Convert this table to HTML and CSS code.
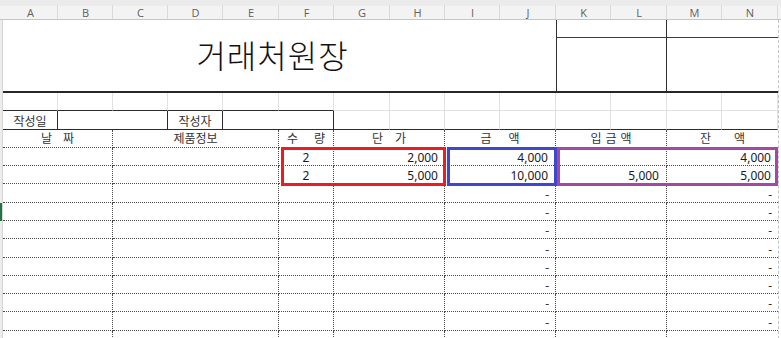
FILE: index.html
```html
<!DOCTYPE html>
<html lang="ko">
<head>
<meta charset="utf-8">
<title>거래처원장</title>
<link rel="stylesheet" href="styles.css">
</head>
<body>
<div class="sheet">
  <div class="rowhead"></div>
  <div class="pagebreak"></div>

  <div class="corner"></div>
  <div class="col">A</div><div class="col">B</div><div class="col">C</div><div class="col">D</div>
  <div class="col">E</div><div class="col">F</div><div class="col">G</div><div class="col">H</div>
  <div class="col">I</div><div class="col">J</div><div class="col">K</div><div class="col">L</div>
  <div class="col">M</div><div class="col">N</div>
  <div class="corner"></div>

  <div class="title">거래처원장</div>
  <div class="sign-top sign-left"></div>
  <div class="sign-top"></div>
  <div class="sign-big sign-left"></div>
  <div class="sign-big"></div>

  <div class="g dark-b"></div><div class="g dark-b"></div><div class="g dark-b"></div>
  <div class="g dark-b"></div><div class="g dark-b"></div><div class="g dark-b"></div>
  <div class="g"></div><div class="g"></div><div class="g"></div><div class="g"></div>
  <div class="g"></div><div class="g"></div><div class="g"></div><div class="g"></div>

  <div class="info">작성일</div>
  <div class="info s2"></div>
  <div class="info">작성자</div>
  <div class="info s2"></div>
  <div class="g dark-b"></div><div class="g dark-b"></div><div class="g dark-b"></div><div class="g dark-b"></div>
  <div class="g dark-b"></div><div class="g dark-b"></div><div class="g dark-b"></div><div class="g dark-b"></div>

  <div class="h s2"><span>날</span><span class="gap11">짜</span></div>
  <div class="h s3"><span>제품정보</span></div>
  <div class="h"><span>수</span><span class="gap16">량</span></div>
  <div class="h s2"><span>단</span><span class="gap12">가</span></div>
  <div class="h s2"><span>금</span><span class="gap17">액</span></div>
  <div class="h s2"><span>입</span><span class="gap4">금</span><span class="gap4">액</span></div>
  <div class="h s2 last"><span>잔</span><span class="gap23">액</span></div>

  <div class="d s2"></div><div class="d s3"></div><div class="d ctr">2</div>
  <div class="d s2 num n6">2,000</div><div class="d s2 num">4,000</div>
  <div class="d s2 num"></div><div class="d s2 num last">4,000</div>

  <div class="d s2"></div><div class="d s3"></div><div class="d ctr">2</div>
  <div class="d s2 num n6">5,000</div><div class="d s2 num">10,000</div>
  <div class="d s2 num">5,000</div><div class="d s2 num last">5,000</div>

  <div class="d s2"></div><div class="d s3"></div><div class="d"></div><div class="d s2"></div>
  <div class="d s2 num dash">-</div><div class="d s2"></div><div class="d s2 num dash last">-</div>

  <div class="d s2"></div><div class="d s3"></div><div class="d"></div><div class="d s2"></div>
  <div class="d s2 num dash">-</div><div class="d s2"></div><div class="d s2 num dash last">-</div>

  <div class="d s2"></div><div class="d s3"></div><div class="d"></div><div class="d s2"></div>
  <div class="d s2 num dash">-</div><div class="d s2"></div><div class="d s2 num dash last">-</div>

  <div class="d s2"></div><div class="d s3"></div><div class="d"></div><div class="d s2"></div>
  <div class="d s2 num dash">-</div><div class="d s2"></div><div class="d s2 num dash last">-</div>

  <div class="d s2"></div><div class="d s3"></div><div class="d"></div><div class="d s2"></div>
  <div class="d s2 num dash">-</div><div class="d s2"></div><div class="d s2 num dash last">-</div>

  <div class="d s2"></div><div class="d s3"></div><div class="d"></div><div class="d s2"></div>
  <div class="d s2 num dash">-</div><div class="d s2"></div><div class="d s2 num dash last">-</div>

  <div class="d s2"></div><div class="d s3"></div><div class="d"></div><div class="d s2"></div>
  <div class="d s2 num dash">-</div><div class="d s2"></div><div class="d s2 num dash last">-</div>

  <div class="d s2"></div><div class="d s3"></div><div class="d"></div><div class="d s2"></div>
  <div class="d s2 num dash">-</div><div class="d s2"></div><div class="d s2 num dash last">-</div>

  <div class="d s2"></div><div class="d s3"></div><div class="d"></div><div class="d s2"></div>
  <div class="d s2"></div><div class="d s2"></div><div class="d s2 last"></div>

  <div class="mark mark-red"></div>
  <div class="mark mark-blue"></div>
  <div class="mark mark-purple"></div>
</div>
</body>
</html>
```

FILE: styles.css
```css
* {
  box-sizing: border-box;
  margin: 0;
  padding: 0;
}

body {
  margin: 0;
  background: #ffffff;
  font-family: "Noto Sans", "Noto Sans CJK KR", sans-serif;
}

.sheet {
  position: relative;
  width: 781px;
  height: 338px;
  overflow: hidden;
  display: grid;
  grid-template-columns: 3px 55px 55px 55px 55px 56px 55px 56px 55px 55px 56px 55px 56px 55px 56px 3px;
  grid-template-rows: 20px 18px 19px 18px 18px 18px 19px 18px 18px 18px 19px 18px 18px 19px 18px 18px 18px 19px 18px;
  background: #ffffff;
}

/* column header bar */
.corner {
  background: linear-gradient(#ebebeb 0 6px, #f3f3f3 6px);
  border-bottom: 1px solid #c6c6c6;
}

.col {
  background:
    linear-gradient(#dadada, #dadada) right bottom / 1px 14px no-repeat,
    linear-gradient(#ebebeb 0 6px, #f3f3f3 6px);
  border-bottom: 1px solid #c6c6c6;
  display: flex;
  align-items: center;
  justify-content: center;
  padding-top: 5px;
  font: 11px "Open Sans", sans-serif;
  color: #5f5f5f;
}

.rowhead {
  grid-column: 1;
  grid-row: 2 / -1;
  background:
    linear-gradient(#217346, #217346) 0 183px / 2px 18px no-repeat,
    #ececec;
  border-right: 1px solid #d6d6d6;
}

.pagebreak {
  grid-column: 16;
  grid-row: 2 / -1;
  border-left: 1px dashed #c2c2c2;
}

/* title block */
.title {
  grid-column: span 10;
  grid-row: span 4;
  border-bottom: 2px solid #262626;
  display: flex;
  align-items: center;
  justify-content: center;
  padding-right: 14px;
  padding-bottom: 4px;
  font: 300 32px/1 "Noto Sans CJK KR", sans-serif;
  letter-spacing: 1px;
  color: #111111;
}

.sign-top {
  grid-column: span 2;
  border-bottom: 1px solid #3c3c3c;
}

.sign-big {
  grid-column: span 2;
  grid-row: span 3;
  border-bottom: 2px solid #262626;
}

.sign-left {
  border-left: 1px solid #2f2f2f;
  border-right: 1px solid #2f2f2f;
}

/* light grid cells */
.g {
  border-right: 1px solid #e1e1e1;
  border-bottom: 1px solid #e1e1e1;
}

.dark-b {
  border-bottom-color: #2b2b2b;
}

/* 작성일 / 작성자 row */
.info {
  border-right: 1px solid #2b2b2b;
  border-bottom: 1px solid #2b2b2b;
  display: flex;
  align-items: center;
  justify-content: center;
  font: 12px "Noto Sans CJK KR", sans-serif;
  color: #333333;
}

.s2 { grid-column: span 2; }
.s3 { grid-column: span 3; }

/* table header */
.h {
  border-right: 1px dotted #4a4a4a;
  border-bottom: 1px dotted #4a4a4a;
  display: flex;
  align-items: center;
  justify-content: center;
  padding-bottom: 3px;
  font: 12px "Noto Sans CJK KR", sans-serif;
  color: #333333;
}

.gap4 { margin-left: 4px; }
.gap11 { margin-left: 11px; }
.gap12 { margin-left: 12px; }
.gap16 { margin-left: 16px; }
.gap17 { margin-left: 17px; }
.gap23 { margin-left: 23px; }

/* data cells */
.d {
  border-right: 1px dotted #4a4a4a;
  border-bottom: 1px dotted #4a4a4a;
  display: flex;
  align-items: flex-end;
  font-size: 12px;
  line-height: 14px;
  color: #1a1a1a;
}

.last {
  border-right: none;
}

.ctr {
  justify-content: center;
}

.num {
  justify-content: flex-end;
  padding-right: 7px;
}

.n6 {
  padding-right: 6px;
}

.dash {
  padding-right: 6px;
  color: #333333;
}

/* hand-drawn highlight rectangles over the sheet */
.mark {
  position: absolute;
  top: 147px;
  height: 39px;
  border: 3px solid;
}

.mark-red {
  left: 281px;
  width: 165px;
  border-color: #ec1c24;
}

.mark-blue {
  left: 447px;
  width: 110px;
  border-color: #3f48cc;
}

.mark-purple {
  left: 557px;
  width: 221px;
  border-color: #a349a4;
}
```
